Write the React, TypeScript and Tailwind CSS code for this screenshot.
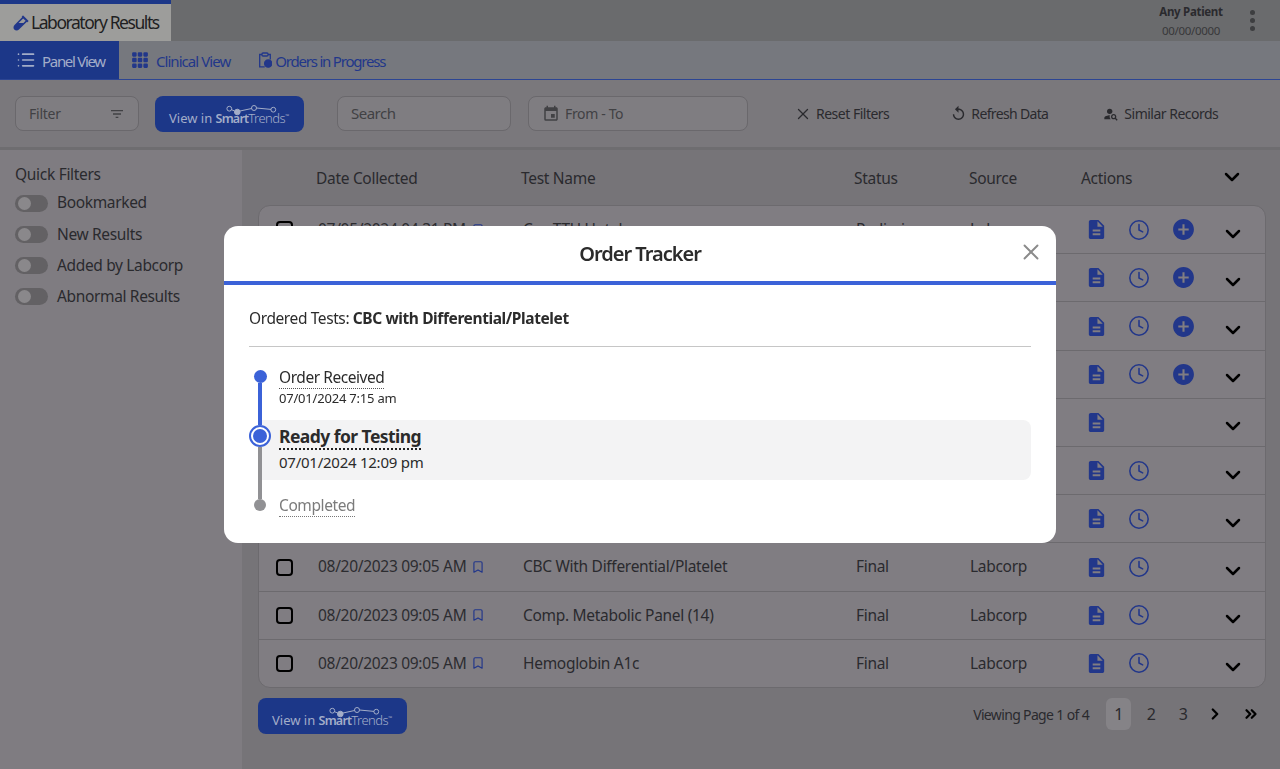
import { Bookmark, ChevronDown, ChevronRight, ChevronsRight, Clock, List, X } from "lucide-react";
import { BsGrid3X3GapFill } from "react-icons/bs";
import { FaVial } from "react-icons/fa";
import { MdAddCircle, MdDescription, MdEvent, MdFilterList, MdPersonSearch, MdReplay } from "react-icons/md";

const rows = [
  { date: "07/05/2024 04:31 PM", test: "Cor. TTU Uptake", status: "Preliminary", source: "Labcorp", clock: true, plus: true },
  { clock: true, plus: true },
  { clock: true, plus: true },
  { clock: true, plus: true },
  { clock: false, plus: false },
  { clock: true, plus: false },
  { clock: true, plus: false },
  { date: "08/20/2023 09:05 AM", test: "CBC With Differential/Platelet", status: "Final", source: "Labcorp", clock: true, plus: false },
  { date: "08/20/2023 09:05 AM", test: "Comp. Metabolic Panel (14)", status: "Final", source: "Labcorp", clock: true, plus: false },
  { date: "08/20/2023 09:05 AM", test: "Hemoglobin A1c", status: "Final", source: "Labcorp", clock: true, plus: false }
];

const quickFilters = ["Bookmarked", "New Results", "Added by Labcorp", "Abnormal Results"];

function SmartTrendsButton() {
  return (
    <button className="relative h-9 w-[149px] shrink-0 rounded-lg bg-[#1c3788] pl-[14px] pt-[2px] text-left text-[13px] leading-[36px] text-[#a3adc8]">
      <svg className="absolute left-[70px] top-[6px]" width="54" height="14" viewBox="0 0 54 14" fill="none" stroke="#a3adc8" strokeWidth="1">
        <circle cx="4.3" cy="6.7" r="2.4" />
        <circle cx="12.3" cy="10" r="2.8" fill="#a3adc8" />
        <circle cx="29" cy="6" r="2.5" />
        <circle cx="48.3" cy="7.7" r="2.4" />
        <path d="M15 9 L26.6 6.5 M31.5 6 L46 7.4 M6.6 7.7 L9.6 9" />
      </svg>
      <span className="tracking-[0px]">View in </span>
      <span className="text-[12.5px] font-semibold tracking-[-0.8px]">Smart</span>
      <span className="font-light tracking-[-0.5px]">Trends</span>
      <span className="align-super text-[5px]">™</span>
    </button>
  );
}

function Toggle() {
  return (
    <span className="flex h-[17px] w-[33px] items-center rounded-full bg-[#636164] pl-[3px]">
      <span className="h-[13px] w-[13px] rounded-full bg-[#8a888b]" />
    </span>
  );
}

function OrderTracker() {
  return (
    <div className="fixed inset-0 flex items-center justify-center">
      <div className="h-[317px] w-[832px] overflow-hidden rounded-[14px] bg-white text-[#2b2b2b]">
        <div className="relative flex h-[55px] items-center justify-center text-[20px] font-semibold tracking-[-1px]">
          Order Tracker
          <X className="absolute right-[12px] top-[13px] text-[#8b8b8b]" size={26} strokeWidth={1.8} />
        </div>
        <div className="h-1 bg-[#3b62d8]" />
        <div className="px-[25px]">
          <p className="mt-[22px] text-[15.5px] leading-[22px] tracking-[-0.4px]">
            Ordered Tests: <span className="font-bold">CBC with Differential/Platelet</span>
          </p>
          <div className="mt-[17px] h-px bg-[#c6c6c6]" />

          <div className="mt-[23px] flex h-[50px]">
            <div className="flex w-[22px] flex-col items-center">
              <span className="h-[13px] w-[13px] shrink-0 rounded-full bg-[#3b62d8]" />
              <span className="w-1 flex-1 bg-[#3b62d8]" />
            </div>
            <div className="-mt-[3px] ml-2">
              <span className="block w-fit border-b border-dotted border-[#555] text-[15.5px] leading-[21px] tracking-[-0.45px]">Order Received</span>
              <span className="block text-[13px] leading-[19px] tracking-[-0.2px]">07/01/2024 7:15 am</span>
            </div>
          </div>

          <div className="relative flex h-[60px]">
            <div className="absolute bottom-0 left-[13px] right-0 top-0 rounded-r-lg bg-[#f3f3f4]" />
            <div className="relative flex w-[22px] flex-col items-center">
              <span className="h-[5px] w-1 bg-[#3b62d8]" />
              <span className="flex h-[22px] w-[22px] shrink-0 items-center justify-center rounded-full border-2 border-[#3b62d8] bg-white">
                <span className="h-[14px] w-[14px] rounded-full bg-[#3b62d8]" />
              </span>
              <span className="w-1 flex-1 bg-[#919194]" />
            </div>
            <div className="relative ml-2 pt-[4px]">
              <span className="block w-fit border-b-2 border-dotted border-[#222] text-[17.5px] font-bold leading-[24px] tracking-[-0.55px]">Ready for Testing</span>
              <span className="mt-[1px] block text-[15px] leading-[22px] tracking-[-0.25px]">07/01/2024 12:09 pm</span>
            </div>
          </div>

          <div className="flex h-[40px]">
            <div className="flex w-[22px] flex-col items-center">
              <span className="h-[19px] w-1 bg-[#919194]" />
              <span className="h-[12px] w-[12px] rounded-full bg-[#919194]" />
            </div>
            <div className="ml-2 pt-[14px]">
              <span className="block w-fit border-b border-dotted border-[#777] text-[15.5px] leading-[22px] tracking-[-0.4px] text-[#7b7b7b]">Completed</span>
            </div>
          </div>
        </div>
      </div>
    </div>
  );
}

export default function App() {
  return (
    <div className="flex h-[769px] w-[1280px] flex-col overflow-hidden bg-[#767478] font-['Noto_Sans',sans-serif] text-[#2a2a2e]">
      <div className="flex h-[41px] shrink-0 items-stretch justify-between bg-[#6a6b6d]">
        <div className="flex w-[171px] items-center gap-[2px] border-t-4 border-[#1c3788] bg-[#9d9d9b] pl-[13px] text-[17.5px] tracking-[-1.45px] text-[#1f1f22]">
          <FaVial className="text-[#22378a]" size={16} />
          Laboratory Results
        </div>
        <div className="flex items-center">
          <div className="w-[80px] text-center text-[11.5px] leading-[19px] tracking-[-0.3px]">
            <p className="font-bold">Any Patient</p>
            <p className="text-[#38383a]">00/00/0000</p>
          </div>
          <div className="ml-[19px] mr-[25px] flex flex-col gap-[3px]">
            <span className="h-[5px] w-[5px] rounded-full bg-[#3d3e40]" />
            <span className="h-[5px] w-[5px] rounded-full bg-[#3d3e40]" />
            <span className="h-[5px] w-[5px] rounded-full bg-[#3d3e40]" />
          </div>
        </div>
      </div>

      <div className="flex h-[39px] shrink-0 items-stretch border-b border-[#2c4593] bg-[#76787e] text-[15px] text-[#22378a]">
        <div className="flex w-[119px] items-center gap-[6px] bg-[#1c3788] pl-[16px] tracking-[-1.3px] text-[#a3adc8]">
          <List size={20} strokeWidth={2} />
          <span className="pt-[2px]">Panel View</span>
        </div>
        <div className="flex items-center gap-[7px] pl-[12px] tracking-[-0.95px]">
          <BsGrid3X3GapFill size={18} />
          <span className="pt-[2px]">Clinical View</span>
        </div>
        <div className="ml-[28px] flex items-center gap-[3px] tracking-[-1.2px]">
          <svg width="14" height="16" viewBox="0 0 14 16" fill="none" stroke="currentColor" strokeWidth="1.3">
            <path d="M4 2.5H1.7v12.4h5M10 2.5h2.3v5" />
            <rect x="4" y="1" width="6" height="3" rx="1" />
            <circle cx="10.2" cy="11.6" r="3.6" fill="currentColor" />
          </svg>
          <span className="pt-[2px]">Orders in Progress</span>
        </div>
      </div>

      <div className="flex h-[70px] shrink-0 items-center border-b-[3px] border-[#6e6d70] bg-[#7a787c] pl-[15px] text-[14px] tracking-[-0.5px]">
        <div className="flex h-[35px] w-[124px] items-center justify-between rounded-lg border border-[#6a686c] bg-[#7f7d81] pl-[13px] pr-[13px] tracking-[-0.25px] text-[#414144]">
          Filter
          <MdFilterList size={16} />
        </div>
        <div className="ml-4">
          <SmartTrendsButton />
        </div>
        <div className="ml-[33px] flex h-[35px] w-[174px] items-center rounded-lg border border-[#6a686c] bg-[#7f7d81] pl-[13px] text-[15px] tracking-[-0.5px] text-[#414144]">Search</div>
        <div className="ml-[17px] flex h-[35px] w-[220px] items-center gap-[5px] rounded-lg border border-[#6a686c] bg-[#7f7d81] pl-[13px] tracking-[-0.35px] text-[#414144]">
          <MdEvent size={18} />
          From - To
        </div>
        <div className="ml-[46px] flex items-center gap-[4px]">
          <X size={18} strokeWidth={1.7} />
          Reset Filters
        </div>
        <div className="ml-[61px] flex items-center gap-[4px] tracking-[-0.65px]">
          <MdReplay size={17} />
          Refresh Data
        </div>
        <div className="ml-[55px] flex items-center gap-[5px]">
          <MdPersonSearch size={16} />
          Similar Records
        </div>
      </div>

      <div className="flex flex-1">
        <aside className="w-[242px] shrink-0 bg-[#7f7c81] pl-[15px] pt-[12px]">
          <p className="text-[15.5px] leading-[24px] tracking-[-0.3px]">Quick Filters</p>
          <div className="mt-[5px] flex flex-col gap-[7.3px]">
            {quickFilters.map((f) => (
              <div key={f} className="flex h-6 items-center gap-[9px] text-[15.5px] tracking-[-0.35px]">
                <Toggle />
                {f}
              </div>
            ))}
          </div>
        </aside>

        <main className="flex-1 pl-4 pr-[14px]">
          <div className="grid h-[55px] grid-cols-[58px_205px_333px_115px_112px_1fr] items-center pt-[3px] text-[15.5px] tracking-[-0.3px]">
            <span />
            <span>Date Collected</span>
            <span>Test Name</span>
            <span>Status</span>
            <span>Source</span>
            <span className="flex items-center justify-between">
              Actions
              <ChevronDown className="relative -top-[2px] mr-[22px] text-black" size={24} strokeWidth={2.5} />
            </span>
          </div>
          <div className="flex h-[483px] flex-col rounded-xl border border-[#6c6a6e] bg-[#807d82]">
            {rows.map((r, i) => (
              <div key={i} className="grid flex-1 grid-cols-[59px_205px_333px_114px_115px_43px_43px_22px_1fr] items-center border-b border-[#6c6a6e] text-[15.5px] tracking-[-0.3px] last:border-b-0">
                <span className="ml-[17px] h-[17px] w-[17px] rounded-[4px] border-2 border-black" />
                <span className="flex items-center gap-[5px] text-[#2c2c30]">
                  {r.date}
                  <Bookmark className="text-[#22378a]" size={14} strokeWidth={2} />
                </span>
                <span>{r.test}</span>
                <span>{r.status}</span>
                <span>{r.source}</span>
                <MdDescription className="text-[#22378a]" size={23} />
                <span>{r.clock && <Clock className="text-[#22378a]" size={22} strokeWidth={1.7} />}</span>
                <span>{r.plus && <MdAddCircle className="text-[#22378a]" size={25} />}</span>
                <ChevronDown className="ml-[28px] mt-[8px] text-black" size={24} strokeWidth={2.5} />
              </div>
            ))}
          </div>
          <div className="mt-[10px] flex items-start justify-between">
            <SmartTrendsButton />
            <div className="flex items-center text-[14px] tracking-[-0.65px]">
              <span className="mr-[17px]">Viewing Page 1 of 4</span>
              <span className="flex h-8 w-[25px] items-center justify-center rounded-md bg-[#858387] text-[16px]">1</span>
              <span className="ml-[15px] w-[10px] text-center text-[16px]">2</span>
              <span className="ml-[22px] w-[10px] text-center text-[16px]">3</span>
              <ChevronRight className="ml-[18px] text-black" size={18} strokeWidth={3} />
              <ChevronsRight className="ml-[18px] mr-[6px] text-black" size={18} strokeWidth={3} />
            </div>
          </div>
        </main>
      </div>

      <OrderTracker />
    </div>
  );
}
